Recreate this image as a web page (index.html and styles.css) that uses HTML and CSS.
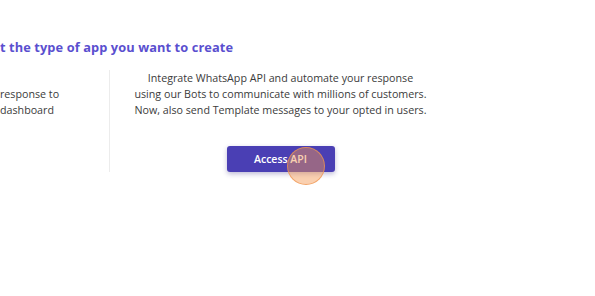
FILE: index.html
```html
<!DOCTYPE html>
<html>
<head>
<meta charset="utf-8">
<link rel="stylesheet" href="styles.css">
</head>
<body>
<div class="page">
  <h1 class="title">t the type of app you want to create</h1>
  <div class="options">
    <div class="option option-left">
      <p class="desc">response to<br>dashboard</p>
    </div>
    <div class="option option-right">
      <p class="desc">Integrate WhatsApp API and automate your response<br>using our Bots to communicate with millions of customers.<br>Now, also send Template messages to your opted in users.</p>
      <div class="action">
        <button class="btn">Access API<span class="cursor"></span></button>
      </div>
    </div>
  </div>
</div>
</body>
</html>
```

FILE: styles.css
```css
html, body {
  margin: 0;
  padding: 0;
  background: #ffffff;
  width: 595px;
  height: 296px;
  overflow: hidden;
}
.page {
  font-family: "Open Sans", "Liberation Sans", sans-serif;
  color: #3a3a3a;
}
.title {
  margin: 0;
  padding-top: 38px;
  font-size: 12.8px;
  line-height: 18px;
  font-weight: 700;
  color: #5a4fcf;
  letter-spacing: 0.1px;
}
.options {
  display: flex;
  margin-top: 14px;
}
.option-left {
  width: 110px;
  border-right: 1px solid #ececec;
  height: 102px;
  box-sizing: border-box;
  padding-top: 16px;
}
.option-right {
  width: 341px;
  display: flex;
  flex-direction: column;
  align-items: center;
}
.desc {
  margin: 0;
  font-size: 10.7px;
  line-height: 16px;
  color: #3b3b3b;
}
.option-right .desc {
  text-align: center;
}
.action {
  margin-top: 28px;
}
.btn {
  position: relative;
  width: 108px;
  height: 26px;
  border: none;
  border-radius: 3px;
  background: #4a3fb4;
  color: #ffffff;
  font-family: "Open Sans", "Liberation Sans", sans-serif;
  font-size: 10.5px;
  font-weight: 600;
  box-shadow: 0 2px 5px rgba(40, 30, 120, 0.3);
  padding: 0;
}
.cursor {
  position: absolute;
  left: 60px;
  top: 1px;
  width: 38px;
  height: 38px;
  box-sizing: border-box;
  border-radius: 50%;
  background: rgba(245, 150, 80, 0.45);
  border: 1.5px solid rgba(240, 150, 80, 0.75);
}
```
